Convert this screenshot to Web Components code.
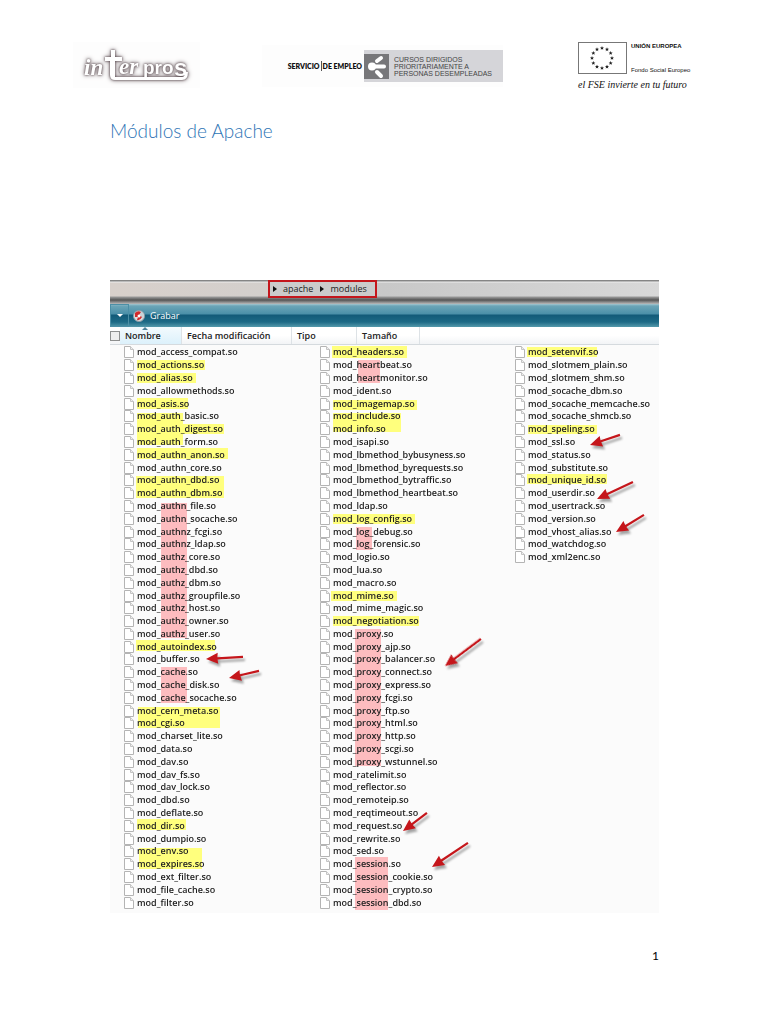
<!DOCTYPE html>
<html lang="es">
<head>
<meta charset="utf-8">
<title>Módulos de Apache</title>
<style>
    body {
        margin: 0;
        background: #fff;
        color: #222;
        font-family: "Open Sans", "Noto Sans", sans-serif;
    }
</style>
</head>
<body>
<doc-page number="1">
    <logo-interpros slot="logos"></logo-interpros>
    <logo-empleo slot="logos"></logo-empleo>
    <logo-europa slot="logos"></logo-europa>
    <span slot="title">Módulos de Apache</span>
    <explorer-window>
        <module-list start="0" end="44"></module-list>
        <module-list start="44" end="88"></module-list>
        <module-list start="88" end="105"></module-list>
    </explorer-window>
</doc-page>

<script>
// crea el shadowRoot y clona la plantilla del elemento
class BaseElement extends HTMLElement {
    constructor(){
        super();
        this.attachShadow({ mode: "open" });
    }
    render(){
        const template = document.createElement('template');
        template.innerHTML = this.getStyles() + this.getTemplate();
        this.shadowRoot.appendChild(template.content.cloneNode(true));
    }
    connectedCallback(){
        this.render();
    }
}

class DocPage extends BaseElement {
    getTemplate(){
        return `
            <header><slot name="logos"></slot></header>
            <main>
                <h1><slot name="title"></slot></h1>
                <slot></slot>
            </main>
            <footer>${this.getAttribute('number')}</footer>
        `;
    }
    getStyles(){
        return `
            <style>
                :host {
                    display: flex;
                    flex-direction: column;
                    box-sizing: border-box;
                    min-height: 100vh;
                    padding-top: 42px;
                }
                header {
                    display: flex;
                    align-items: flex-start;
                    gap: 62px;
                    padding: 0 73px;
                }
                ::slotted(logo-europa) {
                    margin-left: auto;
                }
                main {
                    padding: 0 109px 0 110px;
                }
                h1 {
                    margin: 26px 0 136px;
                    color: #2e74b5;
                    font: 300 19px/26px Lato, sans-serif;
                }
                footer {
                    padding: 35px 109px 0;
                    color: #000;
                    font: 12px/16px Lato, sans-serif;
                    text-align: right;
                }
            </style>
        `;
    }
}

class LogoInterpros extends BaseElement {
    getTemplate(){
        return `
            <svg width="127" height="46" viewBox="0 0 127 46" role="img" aria-label="interpros">
                <rect width="127" height="46" fill="#fdfdfd"/>
                <g class="glow" fill="#fff">
                    <path d="M38 8h4v7h7v4h-7v16h67q3 0 3-5h3q0 8-6 8H42q-5 0-5-5V19h-5v-4h6z"/>
                    <g font-family="Liberation Serif, serif" font-style="italic" font-weight="700" font-size="23">
                        <text x="11" y="33">in</text>
                        <text x="46" y="32">er</text>
                    </g>
                    <g font-family="Liberation Sans, sans-serif" font-weight="700">
                        <text x="70" y="32" font-size="19">pro</text>
                        <text x="101" y="34" font-size="24">s</text>
                    </g>
                </g>
            </svg>
        `;
    }
    getStyles(){
        return `
            <style>
                :host, svg { display: block; }
                .glow { filter: drop-shadow(0 0 1px #54464a) drop-shadow(0 0 2px #85787c); }
            </style>
        `;
    }
}

class LogoEmpleo extends BaseElement {
    getTemplate(){
        return `
            <strong>SERVICIO<i></i>DE EMPLEO</strong>
            <div>
                <svg width="25" height="25" viewBox="0 0 25 25">
                    <rect width="25" height="25" fill="#77777a"/>
                    <g stroke="#fff" stroke-width="4" stroke-linecap="round">
                        <path d="M8 12.500h12M13 7l4-3M13 18l4 4"/>
                    </g>
                    <circle cx="8" cy="12.500" r="4" fill="#fff"/>
                </svg>
                <p>CURSOS DIRIGIDOS<br>PRIORITARIAMENTE A<br>PERSONAS DESEMPLEADAS</p>
            </div>
        `;
    }
    getStyles(){
        return `
            <style>
                :host {
                    display: flex;
                    justify-content: flex-end;
                    align-items: center;
                    gap: 2px;
                    width: 241px;
                    height: 42px;
                    margin-top: 3px;
                    background: #fdfdfd;
                }
                strong {
                    display: flex;
                    align-items: center;
                    gap: 1px;
                    color: #111;
                    font: 800 7px/10px Lato, sans-serif;
                }
                i {
                    width: 1px;
                    height: 10px;
                    background: #555;
                }
                div {
                    display: flex;
                    align-items: center;
                    gap: 5px;
                    width: 139px;
                    height: 32px;
                    background: #d5d5d9;
                }
                p {
                    margin: 0;
                    color: #444;
                    font: 7px/7px "Liberation Sans", sans-serif;
                    white-space: nowrap;
                }
            </style>
        `;
    }
}

class LogoEuropa extends BaseElement {
    // doce estrellas en circulo
    getStars(){
        let stars = '';
        for(let i = 0; i < 12; i++){
            stars += `<path transform="translate(24 16) rotate(${i * 30}) translate(0 -10) rotate(${-i * 30})"
                d="M0-2 .6-.6 2-.6.9.4 1.300 1.800 0 1-1.300 1.800-.9.4-2-.6-.6-.6z"/>`;
        }
        return stars;
    }
    getTemplate(){
        return `
            <div>
                <svg width="49" height="32" viewBox="0 0 49 32" fill="#222">
                    <rect x=".5" y=".5" width="48" height="31" fill="#fff" stroke="#777"/>
                    ${this.getStars()}
                </svg>
                <p><b>UNIÓN EUROPEA</b><span>Fondo Social Europeo</span></p>
            </div>
            <em>el FSE invierte en tu futuro</em>
        `;
    }
    getStyles(){
        return `
            <style>
                :host {
                    display: block;
                    width: 117px;
                    color: #111;
                    font: 6px/8px "Liberation Sans", sans-serif;
                    white-space: nowrap;
                }
                div {
                    display: flex;
                    gap: 4px;
                }
                p {
                    display: flex;
                    flex-direction: column;
                    justify-content: space-between;
                    margin: 0;
                }
                em {
                    display: block;
                    margin-top: 4px;
                    font: italic 10px/14px "Liberation Serif", cursive;
                }
            </style>
        `;
    }
}

class ExplorerWindow extends BaseElement {
    getTemplate(){
        return `
            <nav>
                <div class="path">
                    <a href="#apache">apache</a>
                    <a href="#modules">modules</a>
                </div>
            </nav>
            <div class="toolbar">
                <button class="drop" aria-label="Más opciones"></button>
                <button class="burn">
                    <svg width="12" height="12" viewBox="0 0 12 12">
                        <circle cx="6" cy="6" r="5.500" fill="#ddd" stroke="#8b9ba5"/>
                        <path d="M6 6V1a5 5 0 0 1 4 8z" fill="#c9d3d8"/>
                        <path d="M2 3q3-3 6-1L6 5l3 2q-2 4-5 3l1-3-3 0z" fill="#d3292a"/>
                        <circle cx="6" cy="6" r="1.500" fill="#fff"/>
                    </svg>
                    Grabar
                </button>
            </div>
            <div class="columns">
                <input type="checkbox" aria-label="Seleccionar todo">
                <button class="name">Nombre</button>
                <button class="date">Fecha modificación</button>
                <button class="type">Tipo</button>
                <button class="size">Tamaño</button>
            </div>
            <div class="files">
                <mark-layer></mark-layer>
                <slot></slot>
            </div>
        `;
    }
    getStyles(){
        return `
            <style>
                :host {
                    display: block;
                    background: #fbfbfb;
                    font-size: 9px;
                    font-weight: 600;
                }
                button {
                    padding: 0;
                    border: 0;
                    background: none;
                    color: inherit;
                    font: inherit;
                    text-align: left;
                }
                nav {
                    display: flex;
                    align-items: flex-start;
                    height: 24px;
                    padding-left: 158px;
                    background: linear-gradient(#858585 0 1px, #eee 2px, transparent 3px 16px, #999 17px, #555 20px, #888 22px, #bbb 24px),
                        linear-gradient(90deg, #d8d0cb, #d3cfcc 30%, #c8c8c8 50%, #d8d8d8);
                }
                .path {
                    display: flex;
                    box-sizing: border-box;
                    width: 109px;
                    height: 18px;
                    padding-left: 3px;
                    gap: 7px;
                    border: 2px solid #c4161c;
                    background: #cbcbcb;
                    font-weight: 500;
                    line-height: 14px;
                }
                a {
                    display: flex;
                    align-items: center;
                    gap: 6px;
                    color: #222;
                    text-decoration: none;
                }
                a::before {
                    content: "";
                    border: solid transparent;
                    border-width: 3px 0 3px 4px;
                    border-left-color: #111;
                }
                .toolbar {
                    display: flex;
                    height: 23px;
                    background: linear-gradient(#a3c6cf, #6ba5b7 2px, #4a8fa8 10px, #125a78 11px, #1d6a86 18px, #5499ab);
                    font-weight: 500;
                }
                .drop {
                    display: flex;
                    align-items: center;
                    justify-content: center;
                    width: 19px;
                    border: 1px solid #4c8fa6;
                }
                .drop::before {
                    content: "";
                    border: solid transparent;
                    border-width: 3px 3px 0;
                    border-top-color: #fff;
                }
                .burn {
                    display: flex;
                    align-items: center;
                    gap: 5px;
                    margin-left: 4px;
                    color: #fff;
                }
                .columns {
                    display: flex;
                    height: 17px;
                    border-bottom: 1px solid #d5dade;
                    background: linear-gradient(#fff 50%, #f2f4f6);
                }
                .columns button {
                    display: grid;
                    align-items: center;
                    box-sizing: border-box;
                    padding-left: 5px;
                    border-right: 1px solid #dde2e6;
                }
                input {
                    appearance: none;
                    box-sizing: border-box;
                    width: 10px;
                    height: 10px;
                    margin: 4px 0 0;
                    border: 1px solid #8e8f8f;
                    background: #eee;
                }
                .name {
                    position: relative;
                    width: 62px;
                    background: linear-gradient(#f3fafe, #dcf1fb);
                }
                /* flecha de orden ascendente */
                .name::before {
                    content: "";
                    position: absolute;
                    top: 0;
                    left: 22px;
                    border: solid transparent;
                    border-width: 0 3px 3px;
                    border-bottom-color: #4d8199;
                }
                .date { width: 110px; }
                .type { width: 65px; }
                .size { width: 63px; }
                .files {
                    position: relative;
                    display: grid;
                    grid-template-columns: 196px 195px 1fr;
                    min-height: 563px;
                    padding: 1px 0 4px 14px;
                }
                mark-layer {
                    position: absolute;
                    inset: 0;
                }
            </style>
        `;
    }
}

// x, y, ancho, alto
const yellow = [
    [27, 15, 68, 10], [27, 28, 59, 10], [27, 53, 51, 11], [27, 68, 46, 32], [27, 79, 87, 10],
    [27, 103, 91, 11], [26, 131, 88, 22], [26, 295, 79, 11], [28, 362, 82, 21], [27, 474, 49, 11],
    [29, 503, 63, 21], [222, 1, 75, 12], [223, 55, 84, 10], [223, 68, 68, 19], [223, 169, 82, 10],
    [221, 246, 66, 10], [223, 271, 86, 10], [417, 2, 70, 10], [418, 80, 69, 9], [417, 129, 80, 10]
];
const pink = [
    [51, 158, 26, 135], [51, 322, 26, 36], [248, 15, 22, 23], [246, 182, 16, 23],
    [245, 284, 26, 137], [245, 512, 33, 53]
];
// desde la cola hasta la punta
const arrows = [
    [133, 312, 96, 314], [149, 326, 119, 333], [371, 294, 335, 321], [317, 468, 293, 486],
    [358, 498, 322, 522], [510, 90, 480, 100], [523, 137, 487, 154], [534, 170, 506, 187]
];

class MarkLayer extends BaseElement {
    getTemplate(){
        const rect = ([x, y, w, h]) => `<rect x="${x}" y="${y}" width="${w}" height="${h}"/>`;
        const arrow = ([x1, y1, x2, y2]) => {
            const angle = Math.atan2(y2 - y1, x2 - x1) * 180 / Math.PI;
            const length = Math.hypot(x2 - x1, y2 - y1);
            return `<path transform="translate(${x2} ${y2}) rotate(${angle})" d="M0 0-12-5.500-11.500-1H${-length}v2.200H-11.500L-12 5.500z"/>`;
        };
        return `
            <svg width="550" height="568" aria-hidden="true">
                <g fill="#ffff7d">${yellow.map(rect).join('')}</g>
                <g fill="#fdbcbf">${pink.map(rect).join('')}</g>
                <g fill="#c5161b" class="arrows">${arrows.map(arrow).join('')}</g>
            </svg>
        `;
    }
    getStyles(){
        return `
            <style>
                :host, svg { display: block; }
                .arrows { filter: drop-shadow(2px 3px 1px rgba(0, 0, 0, .35)); }
            </style>
        `;
    }
}

const modules = `access_compat actions alias allowmethods asis auth_basic auth_digest auth_form
    authn_anon authn_core authn_dbd authn_dbm authn_file authn_socache authnz_fcgi authnz_ldap
    authz_core authz_dbd authz_dbm authz_groupfile authz_host authz_owner authz_user autoindex
    buffer cache cache_disk cache_socache cern_meta cgi charset_lite data dav dav_fs dav_lock dbd
    deflate dir dumpio env expires ext_filter file_cache filter
    headers heartbeat heartmonitor ident imagemap include info isapi lbmethod_bybusyness
    lbmethod_byrequests lbmethod_bytraffic lbmethod_heartbeat ldap log_config log_debug
    log_forensic logio lua macro mime mime_magic negotiation proxy proxy_ajp proxy_balancer
    proxy_connect proxy_express proxy_fcgi proxy_ftp proxy_html proxy_http proxy_scgi
    proxy_wstunnel ratelimit reflector remoteip reqtimeout request rewrite sed session
    session_cookie session_crypto session_dbd
    setenvif slotmem_plain slotmem_shm socache_dbm socache_memcache socache_shmcb speling ssl
    status substitute unique_id userdir usertrack version vhost_alias watchdog xml2enc`.split(/\s+/);

class ModuleList extends BaseElement {
    getTemplate(){
        const names = modules.slice(this.getAttribute('start'), this.getAttribute('end'));
        return `<ul>${names.map(name => `
            <li>
                <svg width="10" height="12" viewBox="0 0 10 12">
                    <path d="M.5.5h6l3 3v8h-9z" fill="#fff" stroke="#b4b4b4"/>
                    <path d="M6.500.5v3h3" fill="#eee" stroke="#c4c4c4"/>
                </svg>
                <span>mod_${name}.so</span>
            </li>`).join('')}</ul>`;
    }
    getStyles(){
        return `
            <style>
                :host {
                    display: block;
                    position: relative;
                }
                ul {
                    display: grid;
                    grid-template-rows: repeat(44, 1fr);
                    height: 100%;
                    margin: 0;
                    padding: 0;
                    list-style: none;
                }
                li {
                    display: flex;
                    align-items: center;
                    gap: 3px;
                    min-height: 0;
                    line-height: 12px;
                    white-space: nowrap;
                }
            </style>
        `;
    }
}

customElements.define('doc-page', DocPage);
customElements.define('logo-interpros', LogoInterpros);
customElements.define('logo-empleo', LogoEmpleo);
customElements.define('logo-europa', LogoEuropa);
customElements.define('mark-layer', MarkLayer);
customElements.define('module-list', ModuleList);
customElements.define('explorer-window', ExplorerWindow);
</script>
</body>
</html>
